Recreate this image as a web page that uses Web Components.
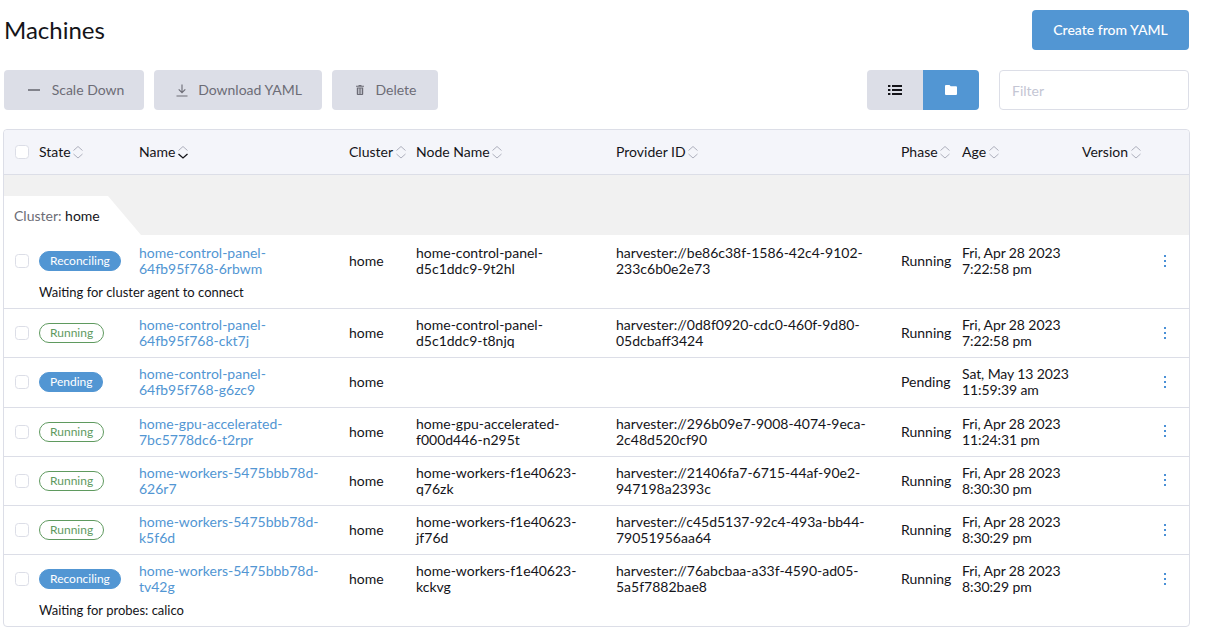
<!DOCTYPE html>
<html><head><meta charset="utf-8">
<style>
html,body{margin:0;background:#fff;overflow:hidden}
body{font-family:Lato,"Open Sans",sans-serif;font-size:14px;color:#141419;height:633px}
</style></head><body>
<machines-page></machines-page>
<script>
const COLS='35px 100px 210px 67px 200px 285px 61px 120px 60px 47px';
const ICONS={
minus:'<svg width="12" height="12" viewBox="0 0 12 12"><path d="M0 6h12" stroke="currentColor" stroke-width="1.6"/></svg>',
download:'<svg width="12" height="13" viewBox="0 0 12 13" fill="none" stroke="currentColor" stroke-width="1.1"><path d="M6 0.5v8M2.7 5.4 6 8.7l3.3-3.3M.5 12h11"/></svg>',
trash:'<svg width="8" height="10" viewBox="0 0 8 10"><path fill="currentColor" d="M2.700 0h2.600l.3.800H8v1H0v-1h2.400zM.8 2.400h6.400V9.200a.8.8 0 0 1-.8.800H1.600a.8.8 0 0 1-.8-.8zM2 3.400v5.600h.7V3.400zm1.650 0v5.600h.7V3.400zm1.650 0v5.600h.7V3.400z"/></svg>',
list:'<svg width="14" height="12" viewBox="0 0 14 12" fill="currentColor"><path d="M0 1h2.400v2H0zM4 1h10v2H4zM0 5h2.400v2H0zM4 5h10v2H4zM0 9h2.400v2H0zM4 9h10v2H4z"/></svg>',
folder:'<svg width="12" height="10" viewBox="0 0 12 10" fill="currentColor"><path d="M1 0h3.500l1.200 1.300H11a1 1 0 0 1 1 1V9a1 1 0 0 1-1 1H1a1 1 0 0 1-1-1V1a1 1 0 0 1 1-1z"/></svg>'
};
class RButton extends HTMLElement{
  constructor(){super();const s=this.attachShadow({mode:'open'});
  const ic=this.getAttribute('icon');
  s.innerHTML=`<style>
  :host{display:inline-flex;align-items:center;justify-content:center;height:40px;box-sizing:border-box;border-radius:4px;background:#dcdee7;color:#6c6c76;font:14px/20px Lato,sans-serif;gap:var(--g,10px);width:var(--w,auto);padding-left:var(--pl,0);flex:none}
  :host([primary]){background:#5296d3;color:#fff;font-weight:500}
  svg{display:block}
  .i{display:flex;align-items:center}
  </style>${ic?`<span class="i">${ICONS[ic]}</span>`:''}<slot></slot>`;}
}
customElements.define('r-button',RButton);

class SortHead extends HTMLElement{
  constructor(){super();const s=this.attachShadow({mode:'open'});
  const active=this.hasAttribute('active');
  s.innerHTML=`<style>
  :host{display:flex;align-items:center;gap:1.500px;font:14px/16px Lato,sans-serif;color:#141419;white-space:nowrap}
  svg{display:block;flex:none}
  </style><slot></slot><svg width="12" height="14" viewBox="0 0 12 14" fill="none">
  <path d="M1.500 5.500 6 1.500l4.500 4" stroke="#aeb0bd"/>
  <path d="M1.500 9 6 13l4.500-4" stroke="${active?'#141419':'#aeb0bd'}" stroke-width="${active?1.3:1}"/></svg>`;}
}
customElements.define('sort-head',SortHead);

class RCheck extends HTMLElement{
  constructor(){super();const s=this.attachShadow({mode:'open'});
  s.innerHTML=`<style>:host{display:block;width:14px;height:14px;box-sizing:border-box;border:1px solid #dcdee7;border-radius:3.500px;background:#fff}</style>`;}
}
customElements.define('r-check',RCheck);

class StateBadge extends HTMLElement{
  constructor(){super();const s=this.attachShadow({mode:'open'});
  s.innerHTML=`<style>
  :host{display:inline-block;box-sizing:border-box;height:20px;padding:0 10px;border-radius:10px;font:12px/18px Lato,sans-serif;background:#5296d3;color:#fff;white-space:nowrap;border:1px solid #5296d3}
  :host([kind=ok]){background:#fff;color:#5f9a5f;border-color:#5f9a5f}
  </style><slot></slot>`;}
}
customElements.define('state-badge',StateBadge);

class TableHead extends HTMLElement{
  constructor(){super();const s=this.attachShadow({mode:'open'});
  s.innerHTML=`<style>
  :host{display:grid;grid-template-columns:${COLS};align-items:center;height:44px;background:#f4f5fa;border-bottom:1px solid #dcdee7;border-radius:4px 4px 0 0}
  .c{padding-left:11px;margin-top:-1px}
  </style>
  <div class="c"><r-check></r-check></div>
  <sort-head>State</sort-head><sort-head active>Name</sort-head><sort-head>Cluster</sort-head>
  <sort-head>Node Name</sort-head><sort-head>Provider ID</sort-head><sort-head>Phase</sort-head>
  <sort-head>Age</sort-head><sort-head>Version</sort-head><span></span>`;}
}
customElements.define('table-head',TableHead);

class GroupRow extends HTMLElement{
  constructor(){super();const s=this.attachShadow({mode:'open'});
  s.innerHTML=`<style>
  :host{display:block;height:60px;background:#f1f1f1;position:relative}
  .tab{position:absolute;left:0;bottom:0;width:137px;height:39px;box-sizing:border-box;padding:12px 0 0 10px;background:#fff;clip-path:polygon(0 0,104px 0,137px 100%,0 100%);font:14px/16px Lato,sans-serif;color:#141419}
  .k{color:#6c6c76}
  </style><div class="tab"><span class="k">Cluster: </span><slot></slot></div>`;}
}
customElements.define('group-row',GroupRow);

class MachineRow extends HTMLElement{
  constructor(){super();const s=this.attachShadow({mode:'open'});
  const a=n=>this.getAttribute(n)||'';
  const st=a('state');
  const lines=v=>v.split('|').join('<br>');
  s.innerHTML=`<style>
  :host{display:block;border-bottom:1px solid #dcdee7;padding:8.125px 0;font:14px/16px Lato,sans-serif;color:#141419}
  :host([last]){border-bottom:0;padding-bottom:8px}
  :host([first]){padding:10px 0 8px}
  .g{display:grid;grid-template-columns:${COLS};align-items:center;min-height:32px}
  .c{padding-left:11px}
  a{color:#5296d3;text-decoration:none}
  .k{display:flex;flex-direction:column;gap:3px;align-items:center;justify-self:center;margin-left:-1px;margin-top:-1px}
  .k i{display:block;width:2px;height:2px;background:#4a90d6}
  .cell{white-space:nowrap}
  .age{letter-spacing:-.1px}
  .b{display:flex}
  .sub{margin:7px 0 0 35px;font-size:13px}
  .sub:empty{display:none}
  </style><div class="g">
  <div class="c"><r-check></r-check></div>
  <div class="b"><state-badge ${st==='Running'?'kind="ok"':''}>${st}</state-badge></div>
  <div class="cell"><a>${lines(a('name'))}</a></div>
  <div class="cell">${a('cluster')}</div>
  <div class="cell">${lines(a('node'))}</div>
  <div class="cell">${lines(a('provider'))}</div>
  <div class="cell">${a('phase')}</div>
  <div class="cell age">${lines(a('age'))}</div>
  <div></div>
  <div class="k"><i></i><i></i><i></i></div>
  </div><div class="sub">${a('sub')}</div>`;}
}
customElements.define('machine-row',MachineRow);

class MachinesTable extends HTMLElement{
  constructor(){super();const s=this.attachShadow({mode:'open'});
  s.innerHTML=`<style>
  :host{display:block;width:1187px;box-sizing:border-box;margin-left:3px;border:1px solid #dcdee7;border-radius:4px;background:#fff}
  </style><table-head></table-head><group-row>home</group-row><slot></slot>`;}
}
customElements.define('machines-table',MachinesTable);

class MachinesPage extends HTMLElement{
  constructor(){super();const s=this.attachShadow({mode:'open'});
  s.innerHTML=`<style>
  :host{display:block;padding-top:10px;font:14px/16px Lato,sans-serif}
  header{display:flex;justify-content:space-between;align-items:center;padding:0 20px 0 4px;height:40px}
  h1{margin:0;font:400 24px/30px Lato,sans-serif;color:#141419}
  .bar{display:flex;align-items:center;margin:20px 20px 19px 4px;height:40px;gap:10px}
  .sp{flex:1}
  .tog{display:flex;margin-right:10px}
  .tog span{width:56px;height:40px;display:flex;align-items:center;justify-content:center;background:#dcdee7;color:#141419;border-radius:4px 0 0 4px}
  .tog span.on{background:#5296d3;color:#fff;border-radius:0 4px 4px 0}
  .f{width:190px;height:40px;box-sizing:border-box;border:1px solid #dcdee7;border-radius:4px;padding:0 12px;color:#c4c6d4;line-height:40px;font-size:14px;background:#fff}
  </style>
  <header><h1>Machines</h1><r-button primary style="--w:157px">Create from YAML</r-button></header>
  <div class="bar">
    <r-button icon="minus" style="--w:140px;--g:12px;--pl:4px">Scale Down</r-button>
    <r-button icon="download" style="--w:168px;--pl:2px">Download YAML</r-button>
    <r-button icon="trash" style="--w:106px;--g:12px;--pl:2px">Delete</r-button>
    <span class="sp"></span>
    <div class="tog"><span>${ICONS.list}</span><span class="on">${ICONS.folder}</span></div>
    <div class="f">Filter</div>
  </div>
  <machines-table><slot></slot></machines-table>`;}
}
customElements.define('machines-page',MachinesPage);

const rows=[
['Reconciling','home-control-panel-|64fb95f768-6rbwm','home-control-panel-|d5c1ddc9-9t2hl','harvester://be86c38f-1586-42c4-9102-|233c6b0e2e73','Running','Fri, Apr 28 2023|7:22:58 pm','Waiting for cluster agent to connect'],
['Running','home-control-panel-|64fb95f768-ckt7j','home-control-panel-|d5c1ddc9-t8njq','harvester://0d8f0920-cdc0-460f-9d80-|05dcbaff3424','Running','Fri, Apr 28 2023|7:22:58 pm',''],
['Pending','home-control-panel-|64fb95f768-g6zc9','','','Pending','Sat, May 13 2023|11:59:39 am',''],
['Running','home-gpu-accelerated-|7bc5778dc6-t2rpr','home-gpu-accelerated-|f000d446-n295t','harvester://296b09e7-9008-4074-9eca-|2c48d520cf90','Running','Fri, Apr 28 2023|11:24:31 pm',''],
['Running','home-workers-5475bbb78d-|626r7','home-workers-f1e40623-|q76zk','harvester://21406fa7-6715-44af-90e2-|947198a2393c','Running','Fri, Apr 28 2023|8:30:30 pm',''],
['Running','home-workers-5475bbb78d-|k5f6d','home-workers-f1e40623-|jf76d','harvester://c45d5137-92c4-493a-bb44-|79051956aa64','Running','Fri, Apr 28 2023|8:30:29 pm',''],
['Reconciling','home-workers-5475bbb78d-|tv42g','home-workers-f1e40623-|kckvg','harvester://76abcbaa-a33f-4590-ad05-|5a5f7882bae8','Running','Fri, Apr 28 2023|8:30:29 pm','Waiting for probes: calico']
];
const page=document.querySelector('machines-page');
rows.forEach((r,i)=>{
  const at={state:r[0],name:r[1],cluster:'home',node:r[2],provider:r[3],phase:r[4],age:r[5],sub:r[6]};
  const m=document.createElement('template');
  let h='<machine-row';
  for(const k in at)h+=` ${k}="${at[k]}"`;
  if(i===0)h+=' first'; if(i===rows.length-1)h+=' last';
  m.innerHTML=h+'></machine-row>';
  page.appendChild(document.importNode(m.content,true));
});
</script>
</body></html>
